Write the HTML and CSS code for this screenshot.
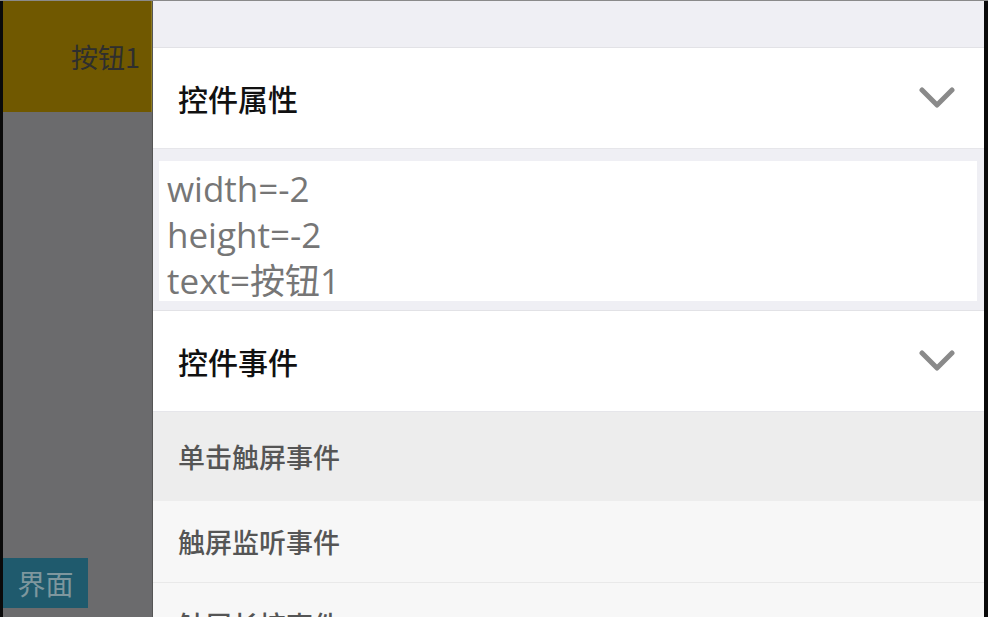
FILE: index.html
```html
<!DOCTYPE html>
<html lang="zh">
<head>
<meta charset="utf-8">
<link rel="stylesheet" href="styles.css">
</head>
<body>
<div class="app">
  <div class="left">
    <div class="btn-block">按钮1</div>
    <div class="spacer"></div>
    <div class="tab">界面</div>
  </div>
  <div class="right">
    <div class="topband"></div>
    <div class="header">
      <span class="title">控件属性</span>
      <svg class="chev" width="36" height="24" viewBox="0 0 36 24"><path d="M3 4 L18 19 L33 4" fill="none" stroke="#8a8a8a" stroke-width="5" stroke-linecap="round" stroke-linejoin="round"/></svg>
    </div>
    <div class="props">
      <div>width=-2</div>
      <div>height=-2</div>
      <div>text=按钮1</div>
    </div>
    <div class="header">
      <span class="title">控件事件</span>
      <svg class="chev" width="36" height="24" viewBox="0 0 36 24"><path d="M3 4 L18 19 L33 4" fill="none" stroke="#8a8a8a" stroke-width="5" stroke-linecap="round" stroke-linejoin="round"/></svg>
    </div>
    <div class="item active">单击触屏事件</div>
    <div class="item">触屏监听事件</div>
    <div class="item last">触屏长按事件</div>
  </div>
</div>
</body>
</html>
```
FILE: styles.css
```css
html, body {
  margin: 0;
  padding: 0;
  width: 988px;
  height: 617px;
  overflow: hidden;
  background: #000;
}
.app {
  display: flex;
  width: 988px;
  height: 617px;
  border-top: 1px solid #8a8a8a;
  box-sizing: border-box;
  font-family: "Open Sans", "Noto Sans CJK SC", sans-serif;
}
.left {
  width: 152px;
  flex: none;
  box-sizing: border-box;
  border-left: 3px solid #0a0a0a;
  background: #6b6b6d;
  display: flex;
  flex-direction: column;
}
.btn-block {
  height: 111px;
  background: #705800;
  color: #2e2e2e;
  font-family: "Noto Sans CJK SC", sans-serif;
  font-size: 27px;
  display: flex;
  align-items: center;
  justify-content: flex-end;
  padding-right: 11px;
  box-sizing: border-box;
  border-right: 1px solid #8c7a20;
}
.spacer { flex: 1; }
.tab {
  width: 85px;
  height: 50px;
  margin-bottom: 9px;
  background: #1f5a6d;
  color: #7e979e;
  font-family: "Noto Sans CJK SC", sans-serif;
  font-size: 28px;
  display: flex;
  align-items: center;
  justify-content: center;
}
.right {
  flex: 1;
  min-width: 0;
  background: #efeff4;
  border-left: 1px solid #555;
  border-right: 4px solid #0a0a0a;
  display: flex;
  flex-direction: column;
  overflow: hidden;
}
.topband {
  height: 46px;
  flex: none;
}
.header {
  height: 102px;
  flex: none;
  box-sizing: border-box;
  background: #fff;
  border-top: 1px solid #e2e2e6;
  border-bottom: 1px solid #e6e6ea;
  display: flex;
  align-items: center;
  justify-content: space-between;
  padding: 0 29px 0 25px;
}
.title {
  font-family: "Noto Sans CJK SC", sans-serif;
  font-size: 30px;
  font-weight: 500;
  color: #111;
}
.chev { display: block; }
.props {
  margin: 12px 7px 9px 6px;
  height: 140px;
  flex: none;
  box-sizing: border-box;
  background: #fff;
  padding: 5px 0 0 8px;
  color: #767676;
  font-size: 35px;
  line-height: 46px;
}
.item {
  height: 89px;
  flex: none;
  box-sizing: border-box;
  background: #f7f7f7;
  border-bottom: 1px solid #e9e9e9;
  display: flex;
  align-items: center;
  padding-left: 25px;
  font-family: "Noto Sans CJK SC", sans-serif;
  font-size: 27px;
  font-weight: 500;
  color: #555;
}
.item.active {
  background: #ededed;
  border-bottom: none;
}
.item + .item { height: 82px; }
.item.last { border-bottom: none; }
```
